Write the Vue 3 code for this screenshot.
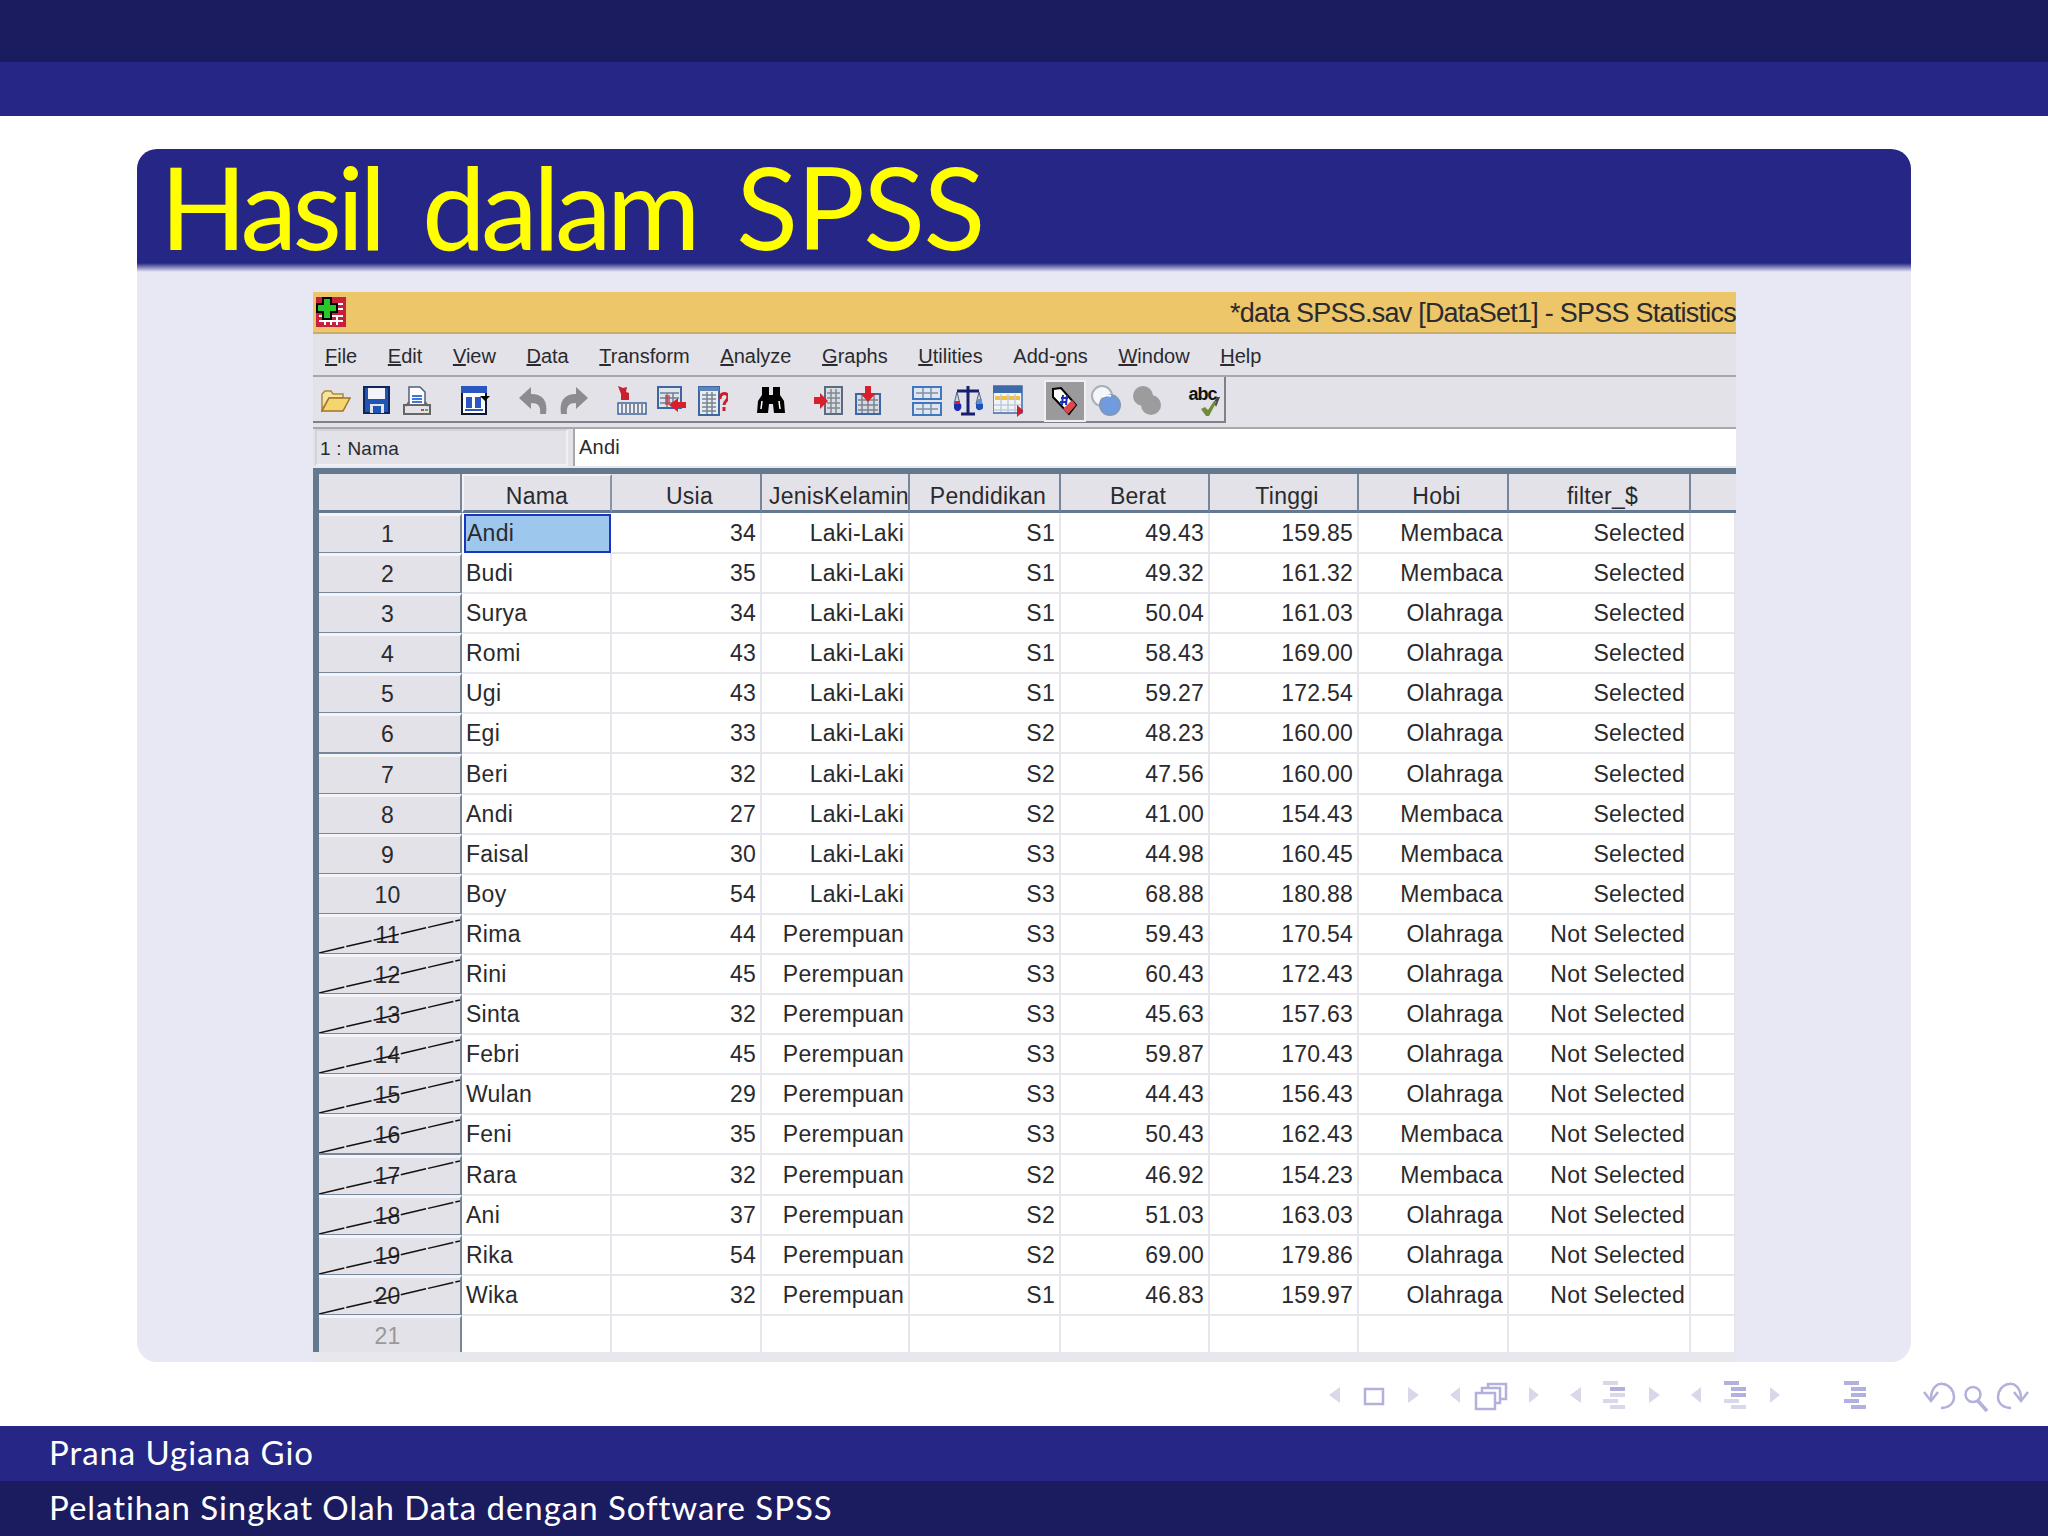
<script setup>
const menus = [
  ['F', 'ile'], ['E', 'dit'], ['V', 'iew'], ['D', 'ata'], ['T', 'ransform'], ['A', 'nalyze'],
  ['G', 'raphs'], ['U', 'tilities'], ['Add-', 'o', 'ns'], ['W', 'indow'], ['H', 'elp'],
]

const columns = ['Nama', 'Usia', 'JenisKelamin', 'Pendidikan', 'Berat', 'Tinggi', 'Hobi', 'filter_$']

const rows = [
  ['Andi', 34, 'Laki-Laki', 'S1', '49.43', '159.85', 'Membaca', 'Selected'],
  ['Budi', 35, 'Laki-Laki', 'S1', '49.32', '161.32', 'Membaca', 'Selected'],
  ['Surya', 34, 'Laki-Laki', 'S1', '50.04', '161.03', 'Olahraga', 'Selected'],
  ['Romi', 43, 'Laki-Laki', 'S1', '58.43', '169.00', 'Olahraga', 'Selected'],
  ['Ugi', 43, 'Laki-Laki', 'S1', '59.27', '172.54', 'Olahraga', 'Selected'],
  ['Egi', 33, 'Laki-Laki', 'S2', '48.23', '160.00', 'Olahraga', 'Selected'],
  ['Beri', 32, 'Laki-Laki', 'S2', '47.56', '160.00', 'Olahraga', 'Selected'],
  ['Andi', 27, 'Laki-Laki', 'S2', '41.00', '154.43', 'Membaca', 'Selected'],
  ['Faisal', 30, 'Laki-Laki', 'S3', '44.98', '160.45', 'Membaca', 'Selected'],
  ['Boy', 54, 'Laki-Laki', 'S3', '68.88', '180.88', 'Membaca', 'Selected'],
  ['Rima', 44, 'Perempuan', 'S3', '59.43', '170.54', 'Olahraga', 'Not Selected'],
  ['Rini', 45, 'Perempuan', 'S3', '60.43', '172.43', 'Olahraga', 'Not Selected'],
  ['Sinta', 32, 'Perempuan', 'S3', '45.63', '157.63', 'Olahraga', 'Not Selected'],
  ['Febri', 45, 'Perempuan', 'S3', '59.87', '170.43', 'Olahraga', 'Not Selected'],
  ['Wulan', 29, 'Perempuan', 'S3', '44.43', '156.43', 'Olahraga', 'Not Selected'],
  ['Feni', 35, 'Perempuan', 'S3', '50.43', '162.43', 'Membaca', 'Not Selected'],
  ['Rara', 32, 'Perempuan', 'S2', '46.92', '154.23', 'Membaca', 'Not Selected'],
  ['Ani', 37, 'Perempuan', 'S2', '51.03', '163.03', 'Olahraga', 'Not Selected'],
  ['Rika', 54, 'Perempuan', 'S2', '69.00', '179.86', 'Olahraga', 'Not Selected'],
  ['Wika', 32, 'Perempuan', 'S1', '46.83', '159.97', 'Olahraga', 'Not Selected'],
]

// beamer nav strip: [left of stack, [dark or light per bar]]
const stacks = [
  [283, ['#d8d8ea', '#b2b0dc', '#d8d8ea', '#d8d8ea', '#d8d8ea']],
  [404, ['#b2b0dc', '#b2b0dc', '#b2b0dc', '#d8d8ea', '#d8d8ea']],
  [524, ['#b2b0dc', '#b2b0dc', '#b2b0dc', '#b2b0dc', '#b2b0dc']],
]
const barY = [6, 12, 18, 24, 30]
const barX = [0, 7, 7, 0, 7]
</script>

<template>
  <div class="slide">
    <header class="top">
      <div class="top-dark"></div>
      <div class="top-blue"></div>
    </header>

    <main class="main">
      <section class="card">
        <h1 class="card-title">Hasil dalam <span>SPSS</span></h1>
        <div class="card-fade"></div>
        <div class="card-body">
          <div class="win">
            <div class="win-title">
              <svg class="win-icon" viewBox="0 0 30 30">
                <rect width="30" height="30" fill="#c8203c" />
                <path d="M3 19h24M3 24h24M9 19v9M15 19v9M21 19v9M20 7h7M20 12h7" stroke="#fff" stroke-width="2" />
                <path d="M7 1h8v6h6v8h-6v7H7v-7H1V7h6z" fill="#28c828" stroke="#000" stroke-width="2" />
              </svg>
              <span class="win-name">*data SPSS.sav [DataSet1] - SPSS Statistics</span>
            </div>

            <nav class="menu">
              <span v-for="m in menus" :key="m.join('')" class="menu-item">
                <template v-if="m.length === 3">{{ m[0] }}<u>{{ m[1] }}</u>{{ m[2] }}</template>
                <template v-else><u>{{ m[0] }}</u>{{ m[1] }}</template>
              </span>
            </nav>

            <div class="toolbar">
              <div class="tools">
                <!-- open -->
                <svg class="ic" viewBox="0 0 30 32">
                  <path d="M1 25V9l3-3h6l2 3h10v4H8z" fill="#f6e3a0" stroke="#a98a3c" stroke-width="1.5" />
                  <path d="M1 26l7-13h21l-7 13z" fill="#f5d66e" stroke="#a07428" stroke-width="1.5" />
                </svg>
                <!-- save -->
                <svg class="ic s" viewBox="0 0 30 32">
                  <rect x="2" y="2" width="25" height="26" fill="#1f55b4" stroke="#10245e" stroke-width="2" />
                  <rect x="6" y="3" width="17" height="11" fill="#f4f4f8" />
                  <rect x="8" y="19" width="14" height="9" fill="#e2e2e8" />
                  <rect x="11" y="21" width="8" height="7" fill="#1f55b4" />
                </svg>
                <!-- print -->
                <svg class="ic s" viewBox="0 0 30 32">
                  <path d="M7 2h11l5 5v13H7z" fill="#fff" stroke="#50607a" stroke-width="1.5" />
                  <path d="M10 11h10M10 14h10M10 17h10" stroke="#3f78d8" stroke-width="2" />
                  <path d="M2 20h26v9H2z" fill="#e4e4e8" stroke="#666" stroke-width="2" />
                  <path d="M4 21l3-4M26 21l-3-4" stroke="#666" stroke-width="2" />
                  <rect x="19" y="24" width="3" height="2" fill="#d84040" />
                  <rect x="23" y="24" width="3" height="2" fill="#50b050" />
                </svg>
                <!-- recall dialog -->
                <svg class="ic l" viewBox="0 0 30 32">
                  <rect x="2" y="2" width="24" height="27" fill="#fff" stroke="#10182e" stroke-width="2" />
                  <rect x="1" y="1" width="26" height="7" fill="#2a58c0" />
                  <rect x="6" y="12" width="6" height="11" fill="#2a58c0" />
                  <rect x="15" y="12" width="6" height="11" fill="#2a58c0" />
                  <path d="M5 25h18" stroke="#2a58c0" stroke-width="2" />
                  <path d="M20 11h10l-5 5z" fill="#000" />
                </svg>
                <!-- undo -->
                <svg class="ic l" viewBox="0 0 30 32">
                  <path d="M1 13L13 2v7c12 0 17 7 15 20h-6c1-8-2-11-9-11v6z" fill="#8c8c90" />
                </svg>
                <!-- redo -->
                <svg class="ic s" viewBox="0 0 30 32">
                  <path d="M29 13L17 2v7C5 9 0 16 2 29h6c-1-8 2-11 9-11v6z" fill="#8c8c90" />
                </svg>
                <!-- go to case -->
                <svg class="ic l" viewBox="0 0 30 32">
                  <path d="M1 1l5 2 4-1-1 5 3 1v7H4V9z" fill="#c8202c" />
                  <rect x="1" y="18" width="28" height="11" fill="#f0f0f4" stroke="#3f66a0" stroke-width="1.5" />
                  <path d="M5 19v9M9 19v9M13 19v9M17 19v9M21 19v9M25 19v9" stroke="#5a6a80" stroke-width="1.5" />
                </svg>
                <!-- go to variable -->
                <svg class="ic s" viewBox="0 0 30 32">
                  <rect x="1" y="2" width="23" height="21" fill="#e0e4ea" stroke="#3f66a0" stroke-width="2" />
                  <path d="M3 8h19M3 13h19M3 18h19M10 8v14M16 8v14" stroke="#70808f" stroke-width="1.5" />
                  <path d="M8 10h5v10H8z" fill="#c04050" opacity=".7" />
                  <path d="M12 20l9-7v4h8v6h-8v4z" fill="#d8202c" />
                </svg>
                <!-- variables -->
                <svg class="ic s" viewBox="0 0 30 32">
                  <rect x="1" y="2" width="20" height="28" fill="#e8ecf0" stroke="#3f66a0" stroke-width="2" />
                  <rect x="1" y="2" width="20" height="4" fill="#5f84b8" />
                  <path d="M4 10h14M4 14h14M4 18h14M4 22h14M4 26h14M9 7v22M14 7v22" stroke="#7a8490" stroke-width="1.5" />
                  <path d="M22 14c0-7 8-7 8-2 0 4-4 4-4 8M26 22v4" fill="none" stroke="#c8202c" stroke-width="3" />
                </svg>
                <!-- find -->
                <svg class="ic l" viewBox="0 0 30 32">
                  <path d="M6 2h7v8h4V2h7v8l4 6 1 12H18l-1-9h-4l-1 9H1l1-12 4-6z" fill="#000" />
                  <path d="M6 16l-1 8M23 16l1 8" stroke="#fff" stroke-width="1.5" />
                </svg>
                <!-- insert case -->
                <svg class="ic l" viewBox="0 0 30 32">
                  <rect x="11" y="2" width="17" height="27" fill="#dadde4" stroke="#5a6a80" stroke-width="2" />
                  <path d="M13 8h13M13 13h13M13 18h13M13 23h13M17 4v24M22 4v24" stroke="#808890" stroke-width="1.5" />
                  <path d="M0 12h6V8l8 8-8 8v-5H0z" fill="#d8202c" />
                </svg>
                <!-- insert variable -->
                <svg class="ic s" viewBox="0 0 30 32">
                  <rect x="2" y="9" width="24" height="20" fill="#d8dce2" stroke="#3f66a0" stroke-width="2" />
                  <path d="M4 15h20M4 20h20M4 25h20M8 10v18M14 10v18M20 10v18" stroke="#7a8490" stroke-width="1.5" />
                  <path d="M11 1h6v7h5l-8 9-8-9h5z" fill="#d8202c" />
                </svg>
                <!-- split -->
                <svg class="ic l" viewBox="0 0 30 32">
                  <rect x="1" y="2" width="28" height="12" fill="#dfe6f0" stroke="#3f78c0" stroke-width="2" />
                  <rect x="1" y="18" width="28" height="12" fill="#dfe6f0" stroke="#3f78c0" stroke-width="2" />
                  <path d="M4 8h22M4 24h22M11 3v10M19 3v10M11 19v10M19 19v10" stroke="#8090a8" stroke-width="1.5" />
                </svg>
                <!-- weight -->
                <svg class="ic s" viewBox="0 0 30 32">
                  <path d="M15 1v27M8 29h14M4 6h22" stroke="#16206e" stroke-width="3" fill="none" />
                  <path d="M1 19l3-12 3 12zM23 19l3-12 3 12z" fill="#d4d8e0" stroke="#506080" />
                  <path d="M1 19h7a3 4 0 0 1-7 4z" fill="#1c2cb0" />
                  <path d="M23 19h7a4 4 0 0 1-7 4z" fill="#1c50b8" />
                  <rect x="2" y="16" width="5" height="3" fill="#d82030" />
                  <rect x="24" y="14" width="5" height="5" fill="#5a90e0" />
                </svg>
                <!-- select -->
                <svg class="ic s" viewBox="0 0 30 32">
                  <rect x="0" y="1" width="29" height="27" fill="#f0f4f8" stroke="#3f6aa8" stroke-width="1.5" />
                  <rect x="0" y="1" width="29" height="7" fill="#3f6aa8" />
                  <path d="M2 11h25v4H2z" fill="#f0c040" />
                  <path d="M1 20h27M1 25h27M8 9v18M15 9v18M22 9v18" stroke="#c0ccd8" stroke-width="1.5" />
                  <path d="M24 20l7 6-7 6z" fill="#c8202c" />
                </svg>
                <!-- value labels -->
                <div class="tool-on">
                  <svg viewBox="0 0 30 32">
                    <path d="M3 4l8-1 15 17-7 9L3 12z" fill="#fff" stroke="#000" stroke-width="2" />
                    <path d="M18 29l8-9-4-5-9 9z" fill="#e04848" />
                    <path d="M11 13h7M10 17h7M13 10l-1 10M17 10l-1 10" stroke="#1a30b0" stroke-width="2" />
                  </svg>
                </div>
                <!-- use sets -->
                <svg class="ic tight" viewBox="0 0 30 32">
                  <circle cx="11" cy="11" r="10" fill="#f4f6fa" stroke="#a8b0b8" stroke-width="2" />
                  <circle cx="19" cy="20" r="10" fill="#6f9ce0" stroke="#8098b8" stroke-width="2" />
                  <path d="M11 12a9 9 0 0 1 9-1" stroke="#fff" stroke-width="2" fill="none" />
                </svg>
                <svg class="ic s" viewBox="0 0 30 32">
                  <circle cx="11" cy="11" r="10" fill="#9c9c9e" />
                  <circle cx="19" cy="20" r="10" fill="#9c9c9e" />
                </svg>
                <!-- spell check, the abc are letters -->
                <div class="ic l abc">
                  <span>abc</span>
                  <svg viewBox="0 0 30 32">
                    <path d="M24 17l3-5 3 0-4 10z" fill="#444" />
                    <path d="M11 24l4-2 3 3 6-9 3 0-8 15h-3z" fill="#708c38" />
                  </svg>
                </div>
              </div>
            </div>

            <div class="editor">
              <div class="cell-name">1 : Nama</div>
              <div class="cell-value">Andi</div>
            </div>

            <div class="grid">
              <div class="row head">
                <div class="corner"></div>
                <div v-for="(c, i) in columns" :key="c" class="hcell" :class="{ active: i === 0 }">{{ c }}</div>
                <div class="hcell last"></div>
              </div>
              <div v-for="(r, i) in rows" :key="i" class="row">
                <div class="rhead">
                  {{ i + 1 }}
                  <svg v-if="i >= 10" class="strike" viewBox="0 0 100 100" preserveAspectRatio="none">
                    <line x1="0" y1="100" x2="100" y2="8" vector-effect="non-scaling-stroke" />
                  </svg>
                </div>
                <div class="cell left" :class="{ sel: i === 0 }">{{ r[0] }}</div>
                <div v-for="(v, k) in r.slice(1)" :key="k" class="cell">{{ v }}</div>
                <div class="cell"></div>
              </div>
              <div class="row">
                <div class="rhead off">21</div>
                <div v-for="k in 9" :key="k" class="cell"></div>
              </div>
            </div>
          </div>
        </div>
      </section>
    </main>

    <div class="nav">
      <svg width="720" height="40" viewBox="0 0 720 40">
        <path fill="#d8d8ea" d="M9 18l11-8v16zM99 18l-11-8v16zM130 18l10-8v16zM219 18l-10-8v16zM250 18l11-8v16zM340 18l-11-8v16zM371 18l10-8v16zM460 18l-10-8v16z" />
        <rect x="45" y="12" width="18" height="15" fill="none" stroke="#b2b0dc" stroke-width="2.5" />
        <g stroke="#b2b0dc" stroke-width="2.5" fill="#fff">
          <rect x="168" y="7" width="18" height="15" />
          <rect x="162" y="11" width="18" height="15" />
          <rect x="156" y="16" width="19" height="16" />
        </g>
        <g v-for="s in stacks" :key="s[0]">
          <rect v-for="(c, i) in s[1]" :key="i" :x="s[0] + barX[i]" :y="barY[i] - 2" width="15" height="4" :fill="c" />
        </g>
        <g fill="none" stroke="#b2b0dc" stroke-width="2.5">
          <path d="M611 22C611 10 618 6 623 7 630 8 634 14 634 20 634 27 628 31 621 31" />
          <path d="M604 15l7 9 7-9" />
          <circle cx="653" cy="17.5" r="7.5" />
          <path d="M658 24l9 10" stroke-width="3.5" />
          <path d="M701 22C701 10 694 6 689 7 682 8 678 14 678 20 678 27 684 31 691 31" />
          <path d="M708 15l-7 9-7-9" />
        </g>
      </svg>
    </div>

    <footer class="foot">
      <div class="foot-blue">Prana Ugiana Gio</div>
      <div class="foot-dark">Pelatihan Singkat Olah Data dengan Software SPSS</div>
    </footer>
  </div>
</template>

<style scoped>
.slide {
  width: 2048px;
  height: 1536px;
  display: flex;
  flex-direction: column;
  background: #fff;
  overflow: hidden;
  font-family: "Liberation Sans", Arial, sans-serif;
}
.top-dark { height: 62px; background: #1b1b5f; }
.top-blue { height: 54px; background: #262686; }
.main {
  height: 1246px;
  padding: 33px 137px 0;
  box-sizing: border-box;
}
.card {
  height: 1213px;
  display: flex;
  flex-direction: column;
  border-radius: 20px;
  overflow: hidden;
  background: #e8e8f4;
}
.card-title {
  margin: 0;
  height: 114px;
  flex: none;
  padding-left: 23px;
  background: #262686;
  color: #ffff00;
  font-family: Lato, sans-serif;
  font-weight: 400;
  font-size: 114px;
  letter-spacing: -4.8px;
  word-spacing: 16px;
  line-height: 114px;
  white-space: nowrap;
}
.card-title span { letter-spacing: -1.6px; }
.card-fade {
  height: 9px;
  flex: none;
  background: linear-gradient(#262686, #e8e8f4);
}
.card-body {
  padding: 20px 175px 0 176px;
}
.win {
  height: 1070px;
  overflow: hidden;
  background: #e7e7ee;
  color: #2a2a2e;
  font-size: 23px;
  letter-spacing: 0.25px;
}
.win-title {
  height: 42px;
  display: flex;
  align-items: center;
  justify-content: space-between;
  overflow: hidden;
  padding-left: 3px;
  box-sizing: border-box;
  background: #ecc668;
  border-bottom: 2px solid #c8ac68;
}
.win-icon { width: 30px; height: 30px; flex: none; }
.win-name {
  font-size: 27px;
  letter-spacing: -0.76px;
  padding-top: 3px;
  color: #2a2a30;
  white-space: nowrap;
}
.menu {
  height: 43px;
  display: flex;
  align-items: center;
  gap: 30.6px;
  padding: 4px 0 0 12px;
  box-sizing: border-box;
  background: #e2e2e8;
  border-bottom: 2px solid #a8a8ac;
  font-size: 20px;
  letter-spacing: 0;
}
.toolbar {
  height: 52px;
  box-sizing: border-box;
  background: #e2e2e8;
  border-bottom: 2px solid #a8a8ac;
}
.tools {
  width: 913px;
  height: 46px;
  box-sizing: border-box;
  display: flex;
  align-items: center;
  padding: 4px 0 0 8px;
  border-right: 2px solid #80808a;
  border-bottom: 2px solid #80808a;
}
.ic { width: 30px; height: 32px; flex: none; }
.ic.s { margin-left: 10.5px; }
.ic.l { margin-left: 28px; }
.ic.tight { margin-left: 7px; }
.tool-on {
  width: 38px;
  height: 38px;
  margin-left: 23px;
  flex: none;
  background: #9a9a9c;
  display: flex;
  align-items: center;
  justify-content: center;
  outline: 2px solid #f0f0f4;
}
.tool-on svg { width: 30px; height: 32px; }
.abc { position: relative; }
.abc span {
  position: absolute;
  left: -1px;
  top: -1px;
  font-size: 18px;
  font-weight: 700;
  letter-spacing: -1px;
  color: #111;
}
.abc svg { position: absolute; inset: 0; }
.editor {
  height: 37px;
  display: flex;
  gap: 5px;
  font-size: 19px;
  background: #e2e2e8;
}
.cell-name {
  width: 253px;
  margin-left: 2px;
  padding: 7px 0 0 3px;
  box-sizing: border-box;
  border: 2px solid #d2d2d8;
  border-right-color: #f0f0f4;
  border-bottom-color: #f0f0f4;
}
.cell-value {
  flex: 1;
  padding: 7px 0 0 4px;
  background: #fff;
  border-left: 2px solid #a8a8ac;
  font-size: 20px;
}
.grid {
  height: 878px;
  overflow: hidden;
  box-sizing: content-box;
  border-top: 6px solid #64788f;
  border-left: 6px solid #64788f;
  background: #fff;
  margin-top: 2px;
}
.row {
  display: grid;
  grid-template-columns: 143px 150px 150px 148px 151px 149px 149px 150px 182px 45px;
  height: 40.1px;
}
.row.head { height: 39px; }
.corner, .hcell {
  background: #e2e2e8;
  border-right: 2px solid #76879a;
  border-bottom: 3px solid #64788f;
  box-sizing: border-box;
}
.hcell {
  text-align: center;
  padding: 8px 0 0 7px;
  line-height: 28px;
  white-space: nowrap;
  overflow: hidden;
}
.hcell.last { border-right: 0; }
.hcell.active {
  border: 2px solid #f2f2f6;
  border-bottom: 3px solid #64788f;
  border-right-color: #8896a4;
  padding: 6px 0 0;
}
.rhead {
  position: relative;
  box-sizing: border-box;
  padding-right: 4px;
  background: #e2e2e8;
  border-top: 3px solid #f4f4f8;
  border-bottom: 2px solid #76879a;
  border-right: 2px solid #76879a;
  text-align: center;
  line-height: 36px;
}
.rhead.off { color: #999; border-bottom: 0; }
.strike {
  position: absolute;
  inset: 0;
  width: 100%;
  height: 100%;
}
.strike line { stroke: #111; stroke-width: 1.5; stroke-dasharray: 26 2; }
.cell {
  box-sizing: border-box;
  padding: 2px 4px 0 0;
  text-align: right;
  line-height: 36px;
  border-right: 2px solid #e6e6ec;
  border-bottom: 2px solid #e6e6ec;
  white-space: nowrap;
  overflow: hidden;
}
.cell.left {
  text-align: left;
  padding-left: 4px;
}
.cell.sel {
  background: #9dc7ec;
  border: 2px solid #1a36c0;
  padding: 0 0 0 1px;
  line-height: 35px;
  margin: 1px 1px 1px 2px;
}
.nav {
  height: 64px;
  box-sizing: border-box;
  display: flex;
  justify-content: flex-end;
  align-items: flex-start;
  padding: 15px 8px 0 0;
}
.foot {
  color: #fff;
  font-family: Lato, sans-serif;
  font-size: 33px;
  letter-spacing: 0.95px;
}
.foot-blue, .foot-dark {
  height: 55px;
  line-height: 52px;
  padding-left: 49px;
}
.foot-blue { background: #262686; }
.foot-dark { background: #1b1b5f; }
</style>
